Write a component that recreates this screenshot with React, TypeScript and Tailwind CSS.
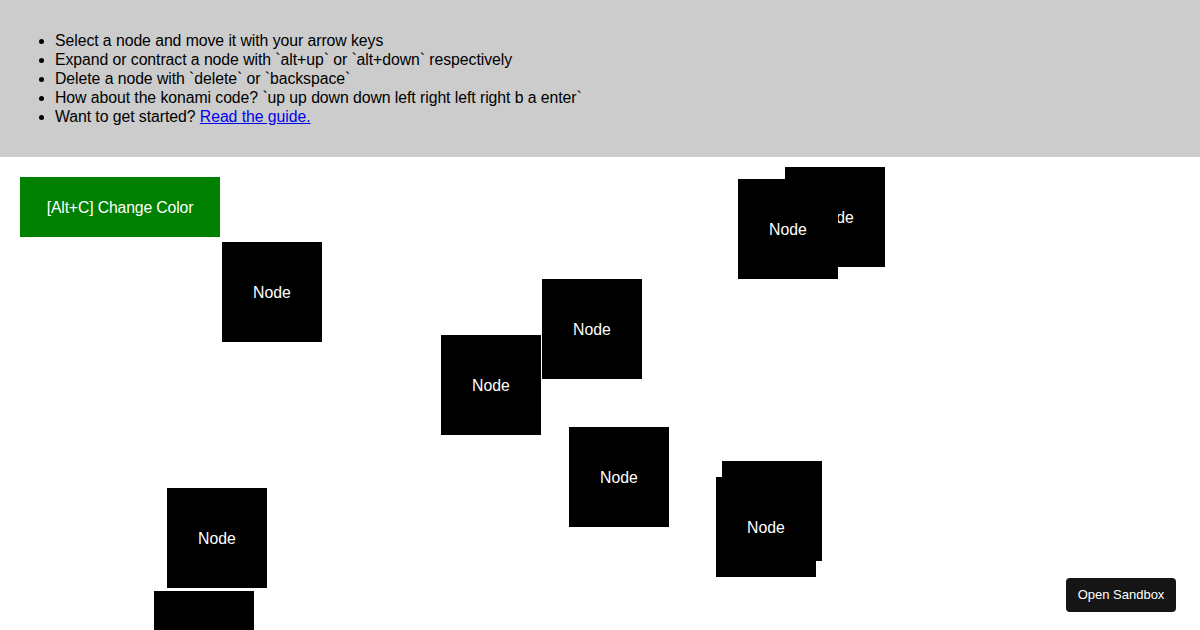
const nodes = [
  { x: 222, y: 85 },
  { x: 542, y: 122 },
  { x: 441, y: 178 },
  { x: 569, y: 270 },
  { x: 167, y: 331 },
  { x: 154, y: 434 },
  { x: 785, y: 10 },
  { x: 738, y: 22 },
  { x: 722, y: 304 },
  { x: 716, y: 320 },
];

export default function App() {
  return (
    <div className="relative h-[630px] w-[1200px] overflow-hidden bg-white font-['Liberation_Sans',Arial,sans-serif] text-[15.8px] text-black">
      {/* Help header */}
      <div className="h-[157px] bg-[#cccccc] px-[15px] py-[15px]">
        <ul className="my-[16px] list-disc pl-[40px] leading-[19px] tracking-[-0.06px]">
          <li>Select a node and move it with your arrow keys</li>
          <li>Expand or contract a node with `alt+up` or `alt+down` respectively</li>
          <li>Delete a node with `delete` or `backspace`</li>
          <li>How about the konami code? `up up down down left right left right b a enter`</li>
          <li>
            Want to get started?{" "}
            <a href="#" className="text-[#0000ee] underline">
              Read the guide.
            </a>
          </li>
        </ul>
      </div>

      {/* Canvas */}
      <div className="relative h-[473px]">
        <div className="px-[20px] pt-[20px]">
          <button className="flex h-[60px] w-[200px] items-center justify-center bg-[#008000] pt-[2px] tracking-[-0.15px] text-white">
            [Alt+C] Change Color
          </button>
        </div>
        {nodes.map((n, i) => (
          <div
            key={i}
            className="absolute flex h-[100px] w-[100px] items-center justify-center bg-black pt-[2px] text-white"
            style={{ left: n.x, top: n.y }}
          >
            Node
          </div>
        ))}
      </div>

      <button className="absolute bottom-[18px] right-[24px] flex h-[34px] w-[110px] items-center justify-center rounded-[4px] bg-[#151515] text-[13px] text-white">
        Open Sandbox
      </button>
    </div>
  );
}
